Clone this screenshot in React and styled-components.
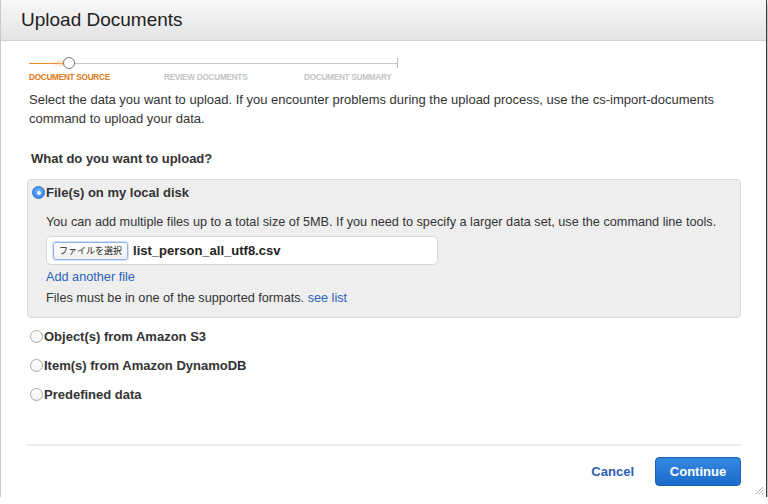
import React from "react";
import styled, { createGlobalStyle } from "styled-components";

const GlobalStyle = createGlobalStyle`
  html, body {
    margin: 0;
    padding: 0;
    background: #ffffff;
  }
  body {
    font-family: "Liberation Sans", Arial, "Noto Sans CJK JP", sans-serif;
    color: #333;
  }
`;

const Modal = styled.div`
  width: 765px;
  height: 497px;
  background: #fff;
  border-left: 1px solid #c8c8c8;
  border-right: 1px solid #3a3a3a;
  box-shadow: 0 3px 5px rgba(0, 0, 0, 0.55);
  display: flex;
  flex-direction: column;
  position: relative;
`;

const Header = styled.header`
  height: 41px;
  box-sizing: border-box;
  border-bottom: 1px solid #d2d2d2;
  background: linear-gradient(#f8f8f8, #e4e4e4);
  display: flex;
  align-items: center;
  padding-left: 20px;
  font-size: 19px;
  color: #222;
`;

const Body = styled.div`
  flex: 1;
  padding: 0 25px 0 26px;
  display: flex;
  flex-direction: column;
`;

const Stepper = styled.div`
  margin-top: 16px;
  margin-left: 2px;
  width: 369px;
`;

const Track = styled.div`
  position: relative;
  height: 12px;
  display: flex;
  align-items: center;
  &::before {
    content: "";
    flex: 1;
    height: 1px;
    background: linear-gradient(to right, #e8892b 0 30px, #f3b070 30px 40px, #c8c8c8 40px);
  }
  &::after {
    content: "";
    width: 1px;
    height: 10px;
    background: #bbb;
  }
`;

const Glow = styled.span`
  position: absolute;
  left: 20px;
  top: 1px;
  width: 22px;
  height: 10px;
  background: radial-gradient(ellipse at right, rgba(240, 150, 60, 0.55), rgba(240, 150, 60, 0) 70%);
`;

const Knob = styled.span`
  position: absolute;
  left: 34px;
  top: 0;
  width: 10px;
  height: 10px;
  border-radius: 50%;
  border: 1px solid #777;
  background: #fff;
`;

const StepLabels = styled.div`
  display: grid;
  grid-template-columns: 135px 140px auto;
  margin-top: 4px;
`;

const StepLabel = styled.span`
  font-size: 8.2px;
  font-weight: bold;
  letter-spacing: -0.25px;
  color: ${(p) => (p.$active ? "#e07a1a" : "#c4c4c4")};
`;

const Intro = styled.p`
  margin: 8px 0 0 2px;
  font-size: 13px;
  line-height: 19px;
  color: #333;
`;

const Question = styled.h3`
  margin: 23px 0 0 4px;
  font-size: 13px;
  font-weight: bold;
  color: #333;
`;

const Panel = styled.div`
  margin-top: 13px;
  width: 714px;
  box-sizing: border-box;
  background: #eeeeee;
  border: 1px solid #dadada;
  border-radius: 4px;
  padding: 4px 0 11px 4px;
`;

const Option = styled.label`
  display: flex;
  align-items: center;
  gap: 1px;
  font-size: 13px;
  font-weight: bold;
  color: #333;
  height: 17px;
`;

const Radio = styled.span`
  width: 13px;
  height: 13px;
  border-radius: 50%;
  box-sizing: border-box;
  display: inline-flex;
  align-items: center;
  justify-content: center;
  ${(p) =>
    p.$checked
      ? `background: radial-gradient(circle at 50% 35%, #6cb0fa, #2b7fe6); border: 1px solid #2a74d6;`
      : `background: linear-gradient(#fff, #f3f3f3); border: 1px solid #aaaaaa;`}
  &::after {
    content: "";
    width: 4px;
    height: 4px;
    border-radius: 50%;
    background: #fff;
    display: ${(p) => (p.$checked ? "block" : "none")};
  }
`;

const PanelBody = styled.div`
  padding-left: 14px;
  margin-top: 14px;
  font-size: 12.7px;
  color: #333;
`;

const FileBox = styled.div`
  margin-top: 6px;
  width: 392px;
  height: 29px;
  box-sizing: border-box;
  background: #fff;
  border: 1px solid #d8d8d8;
  border-radius: 5px;
  display: flex;
  align-items: center;
  padding-left: 6px;
  gap: 5px;
`;

const PickButton = styled.span`
  height: 16px;
  padding: 0 5px;
  display: inline-flex;
  align-items: center;
  border: 1px solid #8fb4ea;
  box-shadow: 0 0 0 1px #cfe0f8;
  border-radius: 3px;
  background: linear-gradient(#fff, #f1f1f1);
  font-family: "Noto Sans CJK JP", sans-serif;
  font-size: 9px;
  color: #222;
`;

const FileName = styled.span`
  font-size: 13px;
  font-weight: bold;
  color: #222;
`;

const Link = styled.a`
  color: #2b63b9;
  text-decoration: none;
  cursor: pointer;
`;

const Line = styled.div`
  margin-top: ${(p) => p.$top || 0}px;
  line-height: 15px;
`;

const Others = styled.div`
  margin-top: 10px;
  padding-left: 3px;
  display: flex;
  flex-direction: column;
  gap: 12px;
`;

const Footer = styled.footer`
  margin-top: auto;
  margin-bottom: 11px;
  width: 714px;
  border-top: 2px solid #ececec;
  display: flex;
  justify-content: flex-end;
  align-items: center;
  gap: 21px;
  padding-top: 11px;
`;

const TextButton = styled.button`
  border: none;
  background: none;
  padding: 0;
  font-family: inherit;
  font-size: 13px;
  font-weight: bold;
  color: #2b5fb4;
  cursor: pointer;
`;

const PrimaryButton = styled.button`
  width: 86px;
  height: 29px;
  border: 1px solid #1a5fb8;
  border-radius: 4px;
  background: linear-gradient(#3588e0, #1b6bcb);
  color: #fff;
  font-family: inherit;
  font-size: 13px;
  font-weight: bold;
  cursor: pointer;
`;

const Grip = styled.svg`
  position: absolute;
  right: 2px;
  bottom: 2px;
`;

const otherSources = [
  "Object(s) from Amazon S3",
  "Item(s) from Amazon DynamoDB",
  "Predefined data",
];

export default function App() {
  return (
    <>
      <GlobalStyle />
      <Modal>
        <Header>Upload Documents</Header>
        <Body>
          <Stepper>
            <Track>
              <Glow />
              <Knob />
            </Track>
            <StepLabels>
              <StepLabel $active>DOCUMENT SOURCE</StepLabel>
              <StepLabel>REVIEW DOCUMENTS</StepLabel>
              <StepLabel>DOCUMENT SUMMARY</StepLabel>
            </StepLabels>
          </Stepper>
          <Intro>
            Select the data you want to upload. If you encounter problems during the upload process, use the cs-import-documents
            <br />
            command to upload your data.
          </Intro>
          <Question>What do you want to upload?</Question>
          <Panel>
            <Option>
              <Radio $checked />
              File(s) on my local disk
            </Option>
            <PanelBody>
              <Line>
                You can add multiple files up to a total size of 5MB. If you need to specify a larger data set, use the command line tools.
              </Line>
              <FileBox>
                <PickButton>ファイルを選択</PickButton>
                <FileName>list_person_all_utf8.csv</FileName>
              </FileBox>
              <Line $top={5}>
                <Link>Add another file</Link>
              </Line>
              <Line $top={6}>
                Files must be in one of the supported formats. <Link>see list</Link>
              </Line>
            </PanelBody>
          </Panel>
          <Others>
            {otherSources.map((label) => (
              <Option key={label}>
                <Radio />
                {label}
              </Option>
            ))}
          </Others>
          <Footer>
            <TextButton>Cancel</TextButton>
            <PrimaryButton>Continue</PrimaryButton>
          </Footer>
        </Body>
        <Grip width="10" height="10" viewBox="0 0 10 10">
          <path d="M9 2 L2 9 M9 5 L5 9 M9 8 L8 9" stroke="#999" strokeWidth="0.8" />
        </Grip>
      </Modal>
    </>
  );
}
